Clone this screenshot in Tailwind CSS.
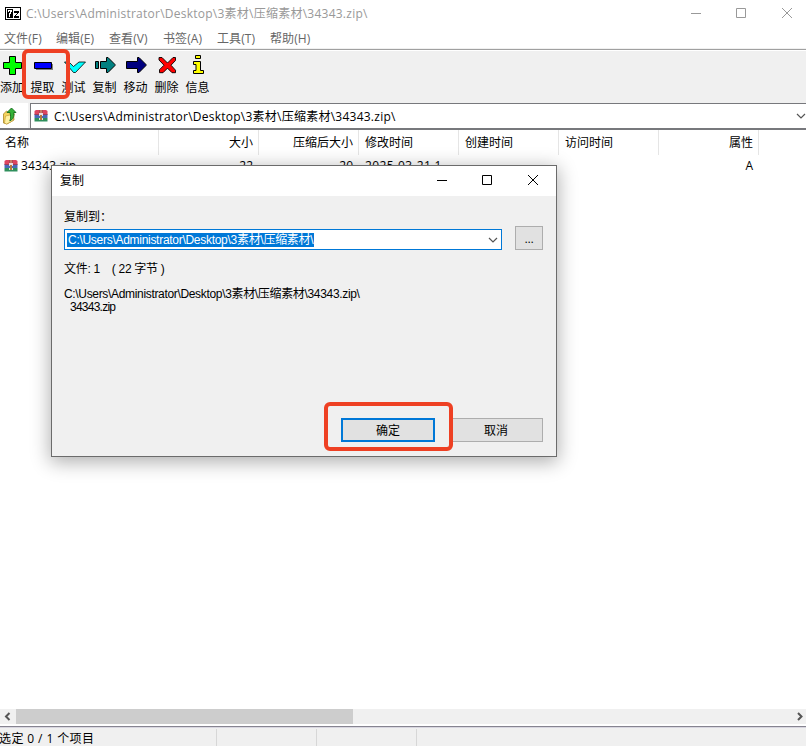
<!DOCTYPE html>
<html lang="zh-CN">
<head>
<meta charset="utf-8">
<title>7-Zip</title>
<script src="https://cdn.jsdelivr.net/npm/@tailwindcss/browser@4"></script>
</head>
<body class="w-[806px] h-[746px] overflow-hidden bg-white">
<svg class="hidden">
  <symbol id="rar" viewBox="0 0 14 14">
    <path d="M2 1h10l1.500 1v3H.5V2z" fill="#dc4560"/><path d="M.5 5h13v4H.5z" fill="#4a6cb8"/><path d="M.5 5h13v1H.5z" fill="#9a3c5c"/><path d="M.5 9h13v3.500H.5z" fill="#2f8f5c"/>
    <path d="M5 1h4v3H5z" fill="#b04a50"/><path d="M6 1h2v3H6z" fill="#c87a6a"/><path d="M5 4h4v3H5z" fill="#e8dfe6"/><path d="M6 6h2v5H6z" fill="#b5793e"/><path d="M5 9h1v2H5zM8 9h1v2H8z" fill="#dfe8d8"/>
  </symbol>
</svg>
<div class="relative w-[806px] h-[746px] flex flex-col overflow-hidden text-[12px] leading-4 whitespace-nowrap text-black font-['Open_Sans','Noto_Sans_CJK_SC',sans-serif]">
  <header class="h-[27px] shrink-0 flex items-center pl-[5px] text-[#999]">
    <svg class="w-4 h-[13px] shrink-0 mr-[5px]" viewBox="0 0 16 13" shape-rendering="crispEdges"><path d="M0 0h16v13H0z" fill="#000"/><path d="M1 1h14v11H1z" fill="#fff"/><path d="M2 2h6v9H2z" fill="#000"/><path d="M3 3h4v2H6v2H5v3H4V6h1V4H4v1H3z" fill="#fff"/><path d="M9 4h5v2h-1v1h-1v1h-1v1h3v2H9V9h1V8h1V7h1V6H9z" fill="#000"/></svg>
    <span class="tracking-[0.245px] pt-px">C:\Users\Administrator\Desktop\3素材\压缩素材\34343.zip\</span>
    <svg class="ml-auto mr-[13px] mb-px w-[104px] h-[12px]" viewBox="0 0 104 12" fill="none" stroke="#999"><path d="M2 6.500h10M47.500 1.500h9v9h-9zM93 1l10 10M103 1L93 11"/></svg>
  </header>
  <nav class="h-[21px] shrink-0 flex items-center pt-[2px] pl-1 text-[#666] tracking-[0.1px]">
    <span class="w-[52px]">文件(F)</span><span class="w-[53px]">编辑(E)</span><span class="w-[54px]">查看(V)</span><span class="w-[54px]">书签(A)</span><span class="w-[53px]">工具(T)</span><span>帮助(H)</span>
  </nav>
  <div class="h-[55px] shrink-0 flex pt-1 border-t border-[#f0f0f0] bg-[#f0f0f0] shadow-[inset_0_1px_0_#a0a0a0,inset_0_2px_0_#fff]">
    <div class="w-[27px] flex flex-col"><svg class="w-[24px] h-[27px]" viewBox="0 0 24 27"><path d="M9.500 3.500h6v6h6v6h-6v6h-6v-6h-6v-6h6z" fill="#0f0" stroke="#000"/></svg><span>添加</span></div>
    <div class="w-[31px] flex flex-col items-center"><svg class="w-[24px] h-[27px]" viewBox="0 0 24 27"><path d="M5 16.500h17M21.500 11v6" stroke="#808080"/><path d="M3.500 9.500h17v6h-17z" fill="#00f" stroke="#000"/></svg><span>提取</span></div>
    <div class="w-[31px] flex flex-col items-center"><svg class="w-[24px] h-[27px] translate-x-px" viewBox="0 0 24 27"><path d="M1.500 9h4.500l4.500 4.500L16 9h6.500l-10 10.500h-2z" fill="#0ff" stroke="#000" stroke-width=".8"/></svg><span>测试</span></div>
    <div class="w-[31px] flex flex-col items-center"><svg class="w-[24px] h-[27px] translate-x-px" viewBox="0 0 24 27"><path d="M1.500 8.500h3v7h-3zM6.500 8.500h6v-4h1.500l7 7v1l-7 7h-1.500v-4h-6z" fill="#008080" stroke="#000"/></svg><span>复制</span></div>
    <div class="w-[31px] flex flex-col items-center"><svg class="w-[24px] h-[27px]" viewBox="0 0 24 27"><path d="M2.500 8.500h11v-4h1.500l7 7v1l-7 7h-1.500v-4h-11z" fill="#000080" stroke="#000"/></svg><span>移动</span></div>
    <div class="w-[31px] flex flex-col items-center"><svg class="w-[24px] h-[27px]" viewBox="0 0 24 27"><path d="M4 4.500h3l5.500 5.500L18 4.500h2.500v3L16 12.200l4.500 5v2.500H17l-4.500-4.500L8 19.700H4.500v-3L9 12.200 4 7z" fill="red" stroke="#000" stroke-width=".9"/></svg><span>删除</span></div>
    <div class="w-[31px] flex flex-col items-center"><svg class="w-[24px] h-[27px]" viewBox="0 0 24 27"><path d="M9.500 2.500h5v3h-5zM7.500 8.500h7v9h3v3h-10v-3h2.500v-6h-2.500z" fill="#ff0" stroke="#000"/></svg><span>信息</span></div>
  </div>
  <div class="h-[27px] shrink-0 flex border-b-2 border-[#77787c] bg-[#f0f0f0]">
    <div class="w-[28px] bg-white flex pt-[3px] pl-[2px]"><svg class="w-4 h-[20px]" viewBox="0 0 16 20"><path d="M1.500 8l3-3 2 1.500L11 5l1 9-7 4-3.500-1z" fill="#f5d35d" stroke="#a98527" stroke-width=".8"/><path d="M3.500 10l9-2-2 7-6 3-2-1z" fill="#fff0a0" stroke="#c4a23e" stroke-width=".7"/><path d="M5 6.500l4.500-4.500L14 6.500h-2.200c.3 4-.3 6.500-4 8.500 1.200-3 1-5 .2-8.500z" fill="#35b238" stroke="#126b1c" stroke-width=".9"/></svg></div>
    <div class="ml-[2px] flex-1 bg-white border-t border-l border-[#77787c] flex items-center pl-[3px]">
      <svg class="w-[14px] h-[14px] mr-[6px]"><use href="#rar"/></svg>
      <span class="tracking-[0.245px] pt-[2px]">C:\Users\Administrator\Desktop\3素材\压缩素材\34343.zip\</span>
      <svg class="ml-auto w-[10px] h-[8px]" viewBox="0 0 10 8"><path d="M1 2l4 4 4-4" fill="none" stroke="#555" stroke-width="1.200"/></svg>
    </div>
  </div>
  <div class="h-[25px] shrink-0 flex leading-[25px]">
    <div class="w-[159px] pl-[5px] border-r border-[#e5e5e5]">名称</div>
    <div class="w-[100px] pr-[5px] text-right border-r border-[#e5e5e5]">大小</div>
    <div class="w-[100px] pr-[5px] text-right border-r border-[#e5e5e5]">压缩后大小</div>
    <div class="w-[100px] pl-[6px] border-r border-[#e5e5e5]">修改时间</div>
    <div class="w-[100px] pl-[6px] border-r border-[#e5e5e5]">创建时间</div>
    <div class="w-[100px] pl-[6px] border-r border-[#e5e5e5]">访问时间</div>
    <div class="w-[100px] pr-[5px] text-right border-r border-[#e5e5e5]">属性</div>
  </div>
  <div class="flex-1 flex pt-[2px]">
    <div class="w-[159px] pl-[4px] flex items-center h-[18px]"><svg class="w-[14px] h-[14px] mr-[3px]"><use href="#rar"/></svg><span class="tracking-[0.2px]">34343.zip</span></div>
    <div class="w-[100px] pr-[6px] text-right leading-[18px]">22</div>
    <div class="w-[100px] pr-[6px] text-right leading-[18px]">20</div>
    <div class="w-[300px] pl-[6px] leading-[18px] tracking-[0.35px]">2025-03-21 1</div>
    <div class="w-[100px] pr-[6px] text-right leading-[18px]">A</div>
  </div>
  <div class="h-[15px] shrink-0 flex items-center bg-[#f0f0f0]">
    <svg class="w-4 h-[15px]" viewBox="0 0 16 15"><path d="M9.500 4L6 7.500 9.500 11" fill="none" stroke="#555" stroke-width="2"/></svg>
    <div class="w-[337px] h-[15px] bg-[#cdcdcd]"></div>
    <svg class="ml-auto w-[16px] h-[15px]" viewBox="0 0 16 15"><path d="M8 4l3.500 3.500L8 11" fill="none" stroke="#555" stroke-width="2"/></svg>
  </div>
  <footer class="h-[22px] shrink-0 pt-[2px] bg-white">
    <div class="h-[20px] flex items-end border-t border-[#868490] bg-[#f0f0f0] shadow-[inset_0_1px_0_#d8d6e0]">
      <div class="w-[217px] h-[17px] border-r border-[#d7d7d7] leading-[20px]"><span class="-ml-px tracking-[0.4px]">选定 0 / 1 个项目</span></div>
      <div class="w-[100px] h-[17px] border-r border-[#d7d7d7]"></div>
      <div class="w-[100px] h-[17px] border-r border-[#d7d7d7]"></div>
    </div>
  </footer>

  <section class="absolute left-[51px] top-[165px] w-[506px] h-[292px] border border-[#6b6b6b] bg-[#f0f0f0] shadow-[0_4px_18px_1px_rgba(0,0,0,0.32)] flex flex-col">
    <div class="h-[30px] shrink-0 bg-white flex items-center pl-[8px]">
      <span>复制</span>
      <svg class="ml-auto mr-[16px] mb-[2px] w-[104px] h-[12px]" viewBox="0 0 104 12" fill="none" stroke="#000"><path d="M1 6.500h10M46.500 1.500h9v9h-9zM92 1l10 10M102 1L92 11"/></svg>
    </div>
    <div class="flex-1 flex flex-col pl-[12px] pr-[13px] font-['Liberation_Sans','Noto_Sans_CJK_SC',sans-serif]">
      <div class="h-[30px] pt-[13px]">复制到：</div>
      <div class="flex items-end h-[24px]">
        <div class="w-[438px] h-[21px] border border-[#0078d7] bg-white flex items-center pl-[2px]">
          <div class="w-[247px] h-[14px] bg-[#0078d7] text-white leading-[14px] pl-px"><span class="tracking-[-0.285px]">C:\Users\Administrator\Desktop\3素材\压缩素材\</span></div>
          <svg class="ml-auto mr-[3px] w-[10px] h-[8px]" viewBox="0 0 10 8"><path d="M1 2l4 4 4-4" fill="none" stroke="#555" stroke-width="1.200"/></svg>
        </div>
        <div class="ml-[13px] w-[28px] h-[24px] border border-[#adadad] bg-[#e1e1e1] text-center leading-[24px] tracking-[-0.4px]">...</div>
      </div>
      <div class="mt-[11px] tracking-[-0.3px]">文件: 1<span class="ml-[12px]">( 22 字节 )</span></div>
      <div class="mt-[11px] leading-[13px] tracking-[-0.33px]">C:\Users\Administrator\Desktop\3素材\压缩素材\34343.zip\<br><span class="ml-[6px] tracking-[-0.75px]">34343.zip</span></div>
      <div class="mt-auto mb-[14px] flex justify-end gap-[14px]">
        <div class="w-[94px] h-[24px] border-2 border-[#0078d7] bg-[#e1e1e1] text-center leading-[22px]">确定</div>
        <div class="w-[94px] h-[24px] border border-[#adadad] bg-[#e1e1e1] text-center leading-[24px]">取消</div>
      </div>
    </div>
  </section>
  <div class="absolute left-[22px] top-[49px] w-[48px] h-[50px] border-4 border-[#ee4023] rounded-[6px]"></div>
  <div class="absolute left-[324px] top-[402px] w-[129px] h-[49px] border-4 border-[#ee4023] rounded-[6px]"></div>
</div>
</body>
</html>
